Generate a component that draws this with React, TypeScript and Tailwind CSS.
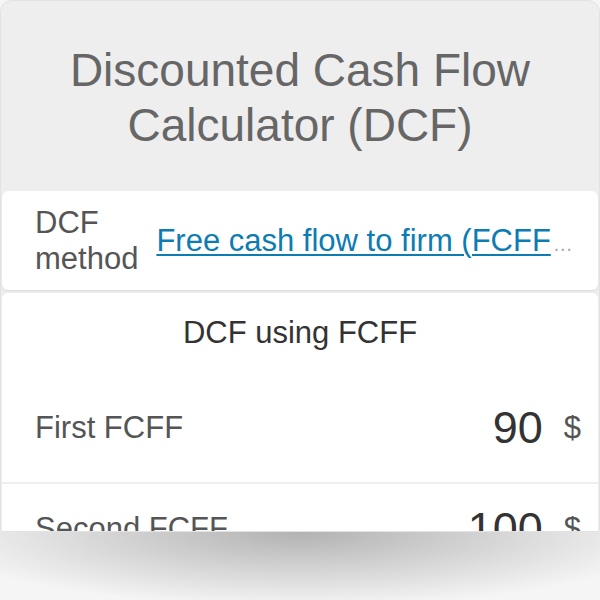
import React from 'react';

const Row: React.FC<{ label: string; value: string; first?: boolean }> = ({ label, value, first }) => (
  <div
    className={
      first
        ? 'flex items-center pt-[19px] pb-[28px] pl-[33px] pr-[17px] border-b-2 border-[#eeeeee]'
        : 'flex items-center pt-[19px] pb-[28px] pl-[33px] pr-[17px]'
    }
  >
    <span className="flex-1 text-[31px] leading-[36px] text-[#555555]">{label}</span>
    <span className="text-[45px] leading-[52px] text-[#333333]">{value}</span>
    <span className="ml-[21px] text-[31px] leading-[36px] text-[#555555]">$</span>
  </div>
);

export default function App() {
  return (
    <div className="w-[600px] h-[600px] bg-[#f5f5f5] font-['Liberation_Sans',Arial,sans-serif]">
      <div className="h-[532px] overflow-hidden bg-[#eeeeee] rounded-t-[12px] border border-[#e2e2e2] px-[1px]">
        <h1 className="pt-[42px] pb-[38px] text-center text-[46px] leading-[55px] text-[#666666]">
          Discounted Cash Flow
          <br />
          Calculator (DCF)
        </h1>

        <div className="bg-white rounded-[6px] shadow-[0_1px_2px_rgba(0,0,0,0.08)] h-[99px] flex items-center pl-[33px] pr-[24px] gap-[18px]">
          <span className="text-[31px] leading-[36px] text-[#555555]">
            DCF
            <br />
            method
          </span>
          <span className="flex-1 min-w-0 flex items-baseline overflow-hidden whitespace-nowrap">
            <span className="text-[31px] leading-[40px] text-[#0c7cb3] underline underline-offset-[3px] decoration-[2px]">
              Free cash flow to firm (FCFF
            </span>
            <span className="ml-[2px] text-[20px] text-[#a8a8a8]">…</span>
          </span>
        </div>

        <div className="mt-[3px] bg-white rounded-t-[6px]">
          <div className="pt-[22px] pb-[32px] text-center text-[31px] leading-[36px] text-[#333333]">
            DCF using FCFF
          </div>
          <Row label="First FCFF" value="90" first />
          <Row label="Second FCFF" value="100" />
        </div>
      </div>
      <div className="h-[68px] bg-[radial-gradient(ellipse_62%_110%_at_50%_0%,#b2b2b2,#f5f5f5)]" />
    </div>
  );
}
